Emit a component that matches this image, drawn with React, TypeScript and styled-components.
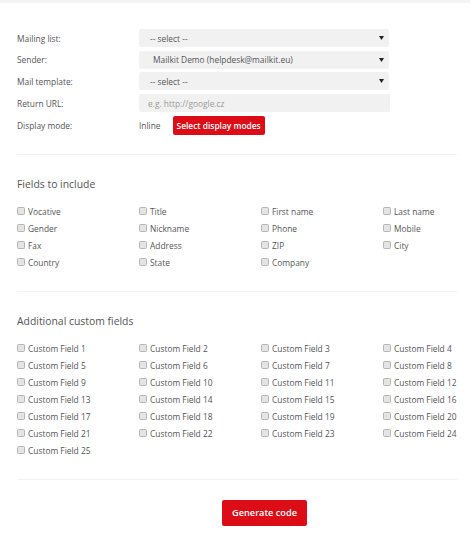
import React from 'react';
import styled, { createGlobalStyle } from 'styled-components';

const GlobalStyle = createGlobalStyle`
    html, body {
        margin: 0;
        padding: 0;
        background: #ffffff;
    }
    body {
        font-family: "Open Sans", "Liberation Sans", sans-serif;
        color: #555555;
    }
`;

const standardFields = [
    'Vocative', 'Title', 'First name', 'Last name',
    'Gender', 'Nickname', 'Phone', 'Mobile',
    'Fax', 'Address', 'ZIP', 'City',
    'Country', 'State', 'Company',
];

const customFields = Array.from({length: 25}, (_, i) => `Custom Field ${i + 1}`);

const Arrow = () => (
    <svg width="5" height="4" viewBox="0 0 5 4">
        <path d="M0 0 L5 0 L2.5 4 Z" fill="#222"/>
    </svg>
);

export default function App() {
    return (
        <Root>
            <GlobalStyle/>
            <TopBar/>
            <Content>
                <Form>
                    <Label>Mailing list:</Label>
                    <Select><span>-- select --</span><Arrow/></Select>

                    <Label>Sender:</Label>
                    <Select><SelectValue>Mailkit Demo (helpdesk@mailkit.eu)</SelectValue><Arrow/></Select>

                    <Label>Mail template:</Label>
                    <Select><span>-- select --</span><Arrow/></Select>

                    <Label>Return URL:</Label>
                    <Input>e.g. http://google.cz</Input>

                    <Label>Display mode:</Label>
                    <ModeRow>
                        <span>Inline</span>
                        <RedButton>Select display modes</RedButton>
                    </ModeRow>
                </Form>

                <Divider $top={19.5}/>

                <Heading>Fields to include</Heading>
                <CheckGrid>
                    {standardFields.map((f) => (
                        <CheckItem key={f}><Box/>{f}</CheckItem>
                    ))}
                </CheckGrid>

                <Divider $top={20.5}/>

                <Heading>Additional custom fields</Heading>
                <CheckGrid>
                    {customFields.map((f) => (
                        <CheckItem key={f}><Box/>{f}</CheckItem>
                    ))}
                </CheckGrid>

                <Divider $top={20.5}/>

                <Footer>
                    <GenerateButton>Generate code</GenerateButton>
                </Footer>
            </Content>
        </Root>
    );
}

const Root = styled.div`
    width: 474px;
    min-height: 557px;
    overflow: hidden;
    background: #ffffff;
`;

const TopBar = styled.div`
    height: 3px;
    width: 470px;
    background: #f4f4f4;
`;

const Content = styled.div`
    padding: 26px 0 0 17px;
    width: 440px;
`;

const Form = styled.div`
    display: grid;
    grid-template-columns: 122px 251px;
    row-gap: 3.7px;
    align-items: center;
    font-size: 8.4px;
`;

const Label = styled.div`
    color: #555;
`;

const Select = styled.div`
    height: 18px;
    background: #f1f1f1;
    border-radius: 2px;
    display: flex;
    align-items: center;
    justify-content: space-between;
    padding: 0 5px 0 11px;
    color: #555;
    width: 250px;
    box-sizing: border-box;
`;

const SelectValue = styled.span`
    padding-left: 3px;
`;

const Input = styled(Select)`
    color: #999;
    padding-left: 9px;
    width: 251px;
`;

const ModeRow = styled.div`
    display: flex;
    align-items: center;
    gap: 12px;
`;

const RedButton = styled.div`
    background: #dc0d17;
    color: #fff;
    font-weight: 600;
    border-radius: 2px;
    height: 19px;
    line-height: 19px;
    padding: 0 4px;
    font-size: 8.4px;
`;

const Divider = styled.div<{ $top: number }>`
    height: 1px;
    background: #f1f1f1;
    margin-top: ${(p) => p.$top}px;
`;

const Heading = styled.div`
    font-size: 10.4px;
    line-height: 14px;
    color: #555;
    margin: 22px 0 11.5px;
`;

const CheckGrid = styled.div`
    display: grid;
    grid-template-columns: repeat(4, 122px);
    grid-auto-rows: 17px;
    font-size: 8.4px;
    white-space: nowrap;
`;

const CheckItem = styled.div`
    display: flex;
    align-items: center;
    gap: 3px;
`;

const Box = styled.span`
    width: 6px;
    height: 6px;
    border: 1px solid #b5b5b5;
    background: #e4e4e4;
    border-radius: 1.5px;
    flex-shrink: 0;
`;

const Footer = styled.div`
    display: grid;
    grid-template-columns: 122px 251px;
    padding: 20px 0 31px;
`;

const GenerateButton = styled.div`
    grid-column: 2;
    justify-self: center;
    background: #dc0d17;
    color: #fff;
    font-weight: 600;
    font-size: 9.2px;
    height: 26px;
    line-height: 26px;
    border-radius: 2px;
    padding: 0 10px;
`;
